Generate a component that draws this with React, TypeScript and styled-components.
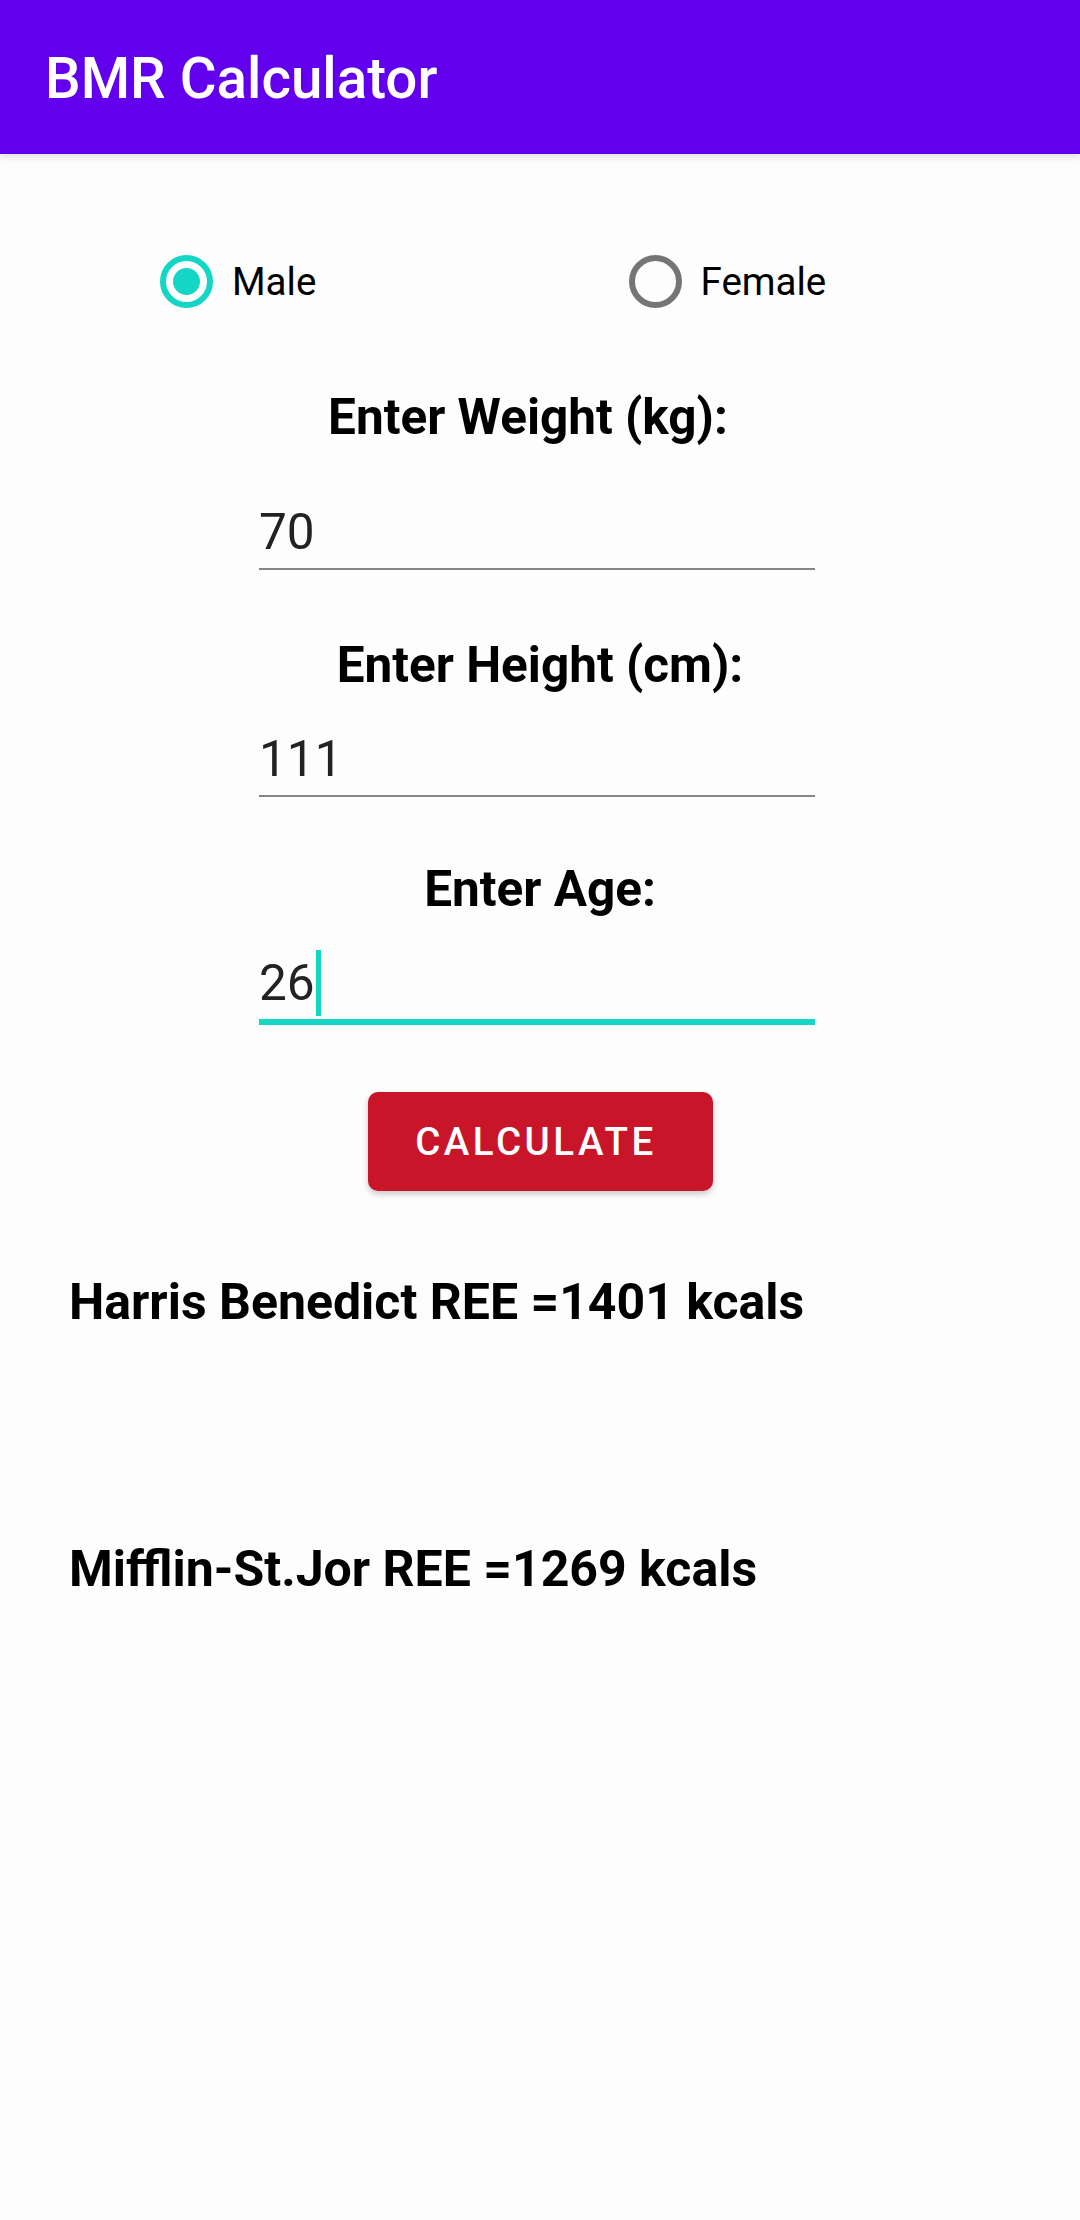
import { createGlobalStyle, styled } from "styled-components";

const GlobalStyle = createGlobalStyle`
  html, body {
    margin: 0;
    padding: 0;
    background: #fdfdfd;
  }
  body {
    font-family: Roboto, "Liberation Sans", sans-serif;
    color: #000;
  }
`;

const Screen = styled.div`
  width: 1080px;
  min-height: 2220px;
  display: flex;
  flex-direction: column;
  background: #fdfdfd;
`;

const AppBar = styled.header`
  height: 154px;
  flex-shrink: 0;
  display: flex;
  align-items: center;
  padding-left: 45px;
  background: #6200ee;
  box-shadow: 0 3px 8px rgba(0, 0, 0, 0.12);
  position: relative;
  z-index: 1;
`;

const Title = styled.h1`
  margin: 0;
  font-size: 56.5px;
  font-weight: 500;
  color: #fff;
  line-height: 1;
  padding-top: 4px;
`;

const Content = styled.main`
  display: flex;
  flex-direction: column;
`;

const RadioRow = styled.div`
  display: flex;
  margin-top: 101px;
  padding-left: 160px;
`;

const RadioOption = styled.label`
  width: 470px;
  display: flex;
  align-items: center;
  gap: 19px;
  font-size: 38.5px;
  color: #000;

  & + & {
    margin-left: 17px;
  }
`;

const RadioCircle = styled.span<{ $checked?: boolean }>`
  width: 53px;
  height: 53px;
  box-sizing: border-box;
  border-radius: 50%;
  border: 6px solid ${(p) => (p.$checked ? "#14d6c4" : "#757575")};
  display: flex;
  align-items: center;
  justify-content: center;

  &::after {
    content: "";
    width: 27px;
    height: 27px;
    border-radius: 50%;
    background: #14d6c4;
    display: ${(p) => (p.$checked ? "block" : "none")};
  }
`;

const Label = styled.div<{ $top: number; $shift?: number }>`
  margin-top: ${(p) => p.$top}px;
  font-size: 49.5px;
  font-weight: 700;
  line-height: 58px;
  text-align: center;
  transform: translateX(${(p) => p.$shift || 0}px);
`;

const Input = styled.div<{ $top: number; $focused?: boolean }>`
  align-self: center;
  width: 556px;
  margin-top: ${(p) => p.$top}px;
  margin-left: -6px;
  font-size: 49.5px;
  line-height: 58px;
  color: #222;
  padding-bottom: ${(p) => (p.$focused ? 3 : 7)}px;
  border-bottom: ${(p) => (p.$focused ? "6px solid #14d6c4" : "2.5px solid #868686")};
  display: flex;
  align-items: center;
`;

const Cursor = styled.span`
  display: inline-block;
  width: 5px;
  height: 66px;
  margin-left: 1px;
  background: #14d6c4;
`;

const CalcButton = styled.button`
  align-self: center;
  margin-top: 67px;
  width: 345px;
  height: 99px;
  border: none;
  border-radius: 10px;
  background: #c8152a;
  color: #fff;
  font-family: Roboto, "Liberation Sans", sans-serif;
  font-size: 38.5px;
  font-weight: 500;
  letter-spacing: 3.5px;
  padding: 0 8px 0 0;
  box-shadow: 0 3px 6px rgba(0, 0, 0, 0.22);
`;

const Result = styled.div<{ $top: number }>`
  margin-top: ${(p) => p.$top}px;
  padding-left: 69px;
  font-size: 50px;
  font-weight: 700;
  line-height: 58px;
`;

export default function App() {
  return (
    <Screen>
      <GlobalStyle />
      <AppBar>
        <Title>BMR Calculator</Title>
      </AppBar>
      <Content>
        <RadioRow>
          <RadioOption>
            <RadioCircle $checked />
            Male
          </RadioOption>
          <RadioOption>
            <RadioCircle />
            Female
          </RadioOption>
        </RadioRow>

        <Label $top={80} $shift={-12}>Enter Weight (kg):</Label>
        <Input $top={57}>70</Input>

        <Label $top={66}>Enter Height (cm):</Label>
        <Input $top={36}>111</Input>

        <Label $top={63}>Enter Age:</Label>
        <Input $top={32} $focused>
          26
          <Cursor />
        </Input>

        <CalcButton>CALCULATE</CalcButton>

        <Result $top={82}>Harris Benedict REE =1401 kcals</Result>
        <Result $top={209}>Mifflin-St.Jor REE =1269 kcals</Result>
      </Content>
    </Screen>
  );
}
